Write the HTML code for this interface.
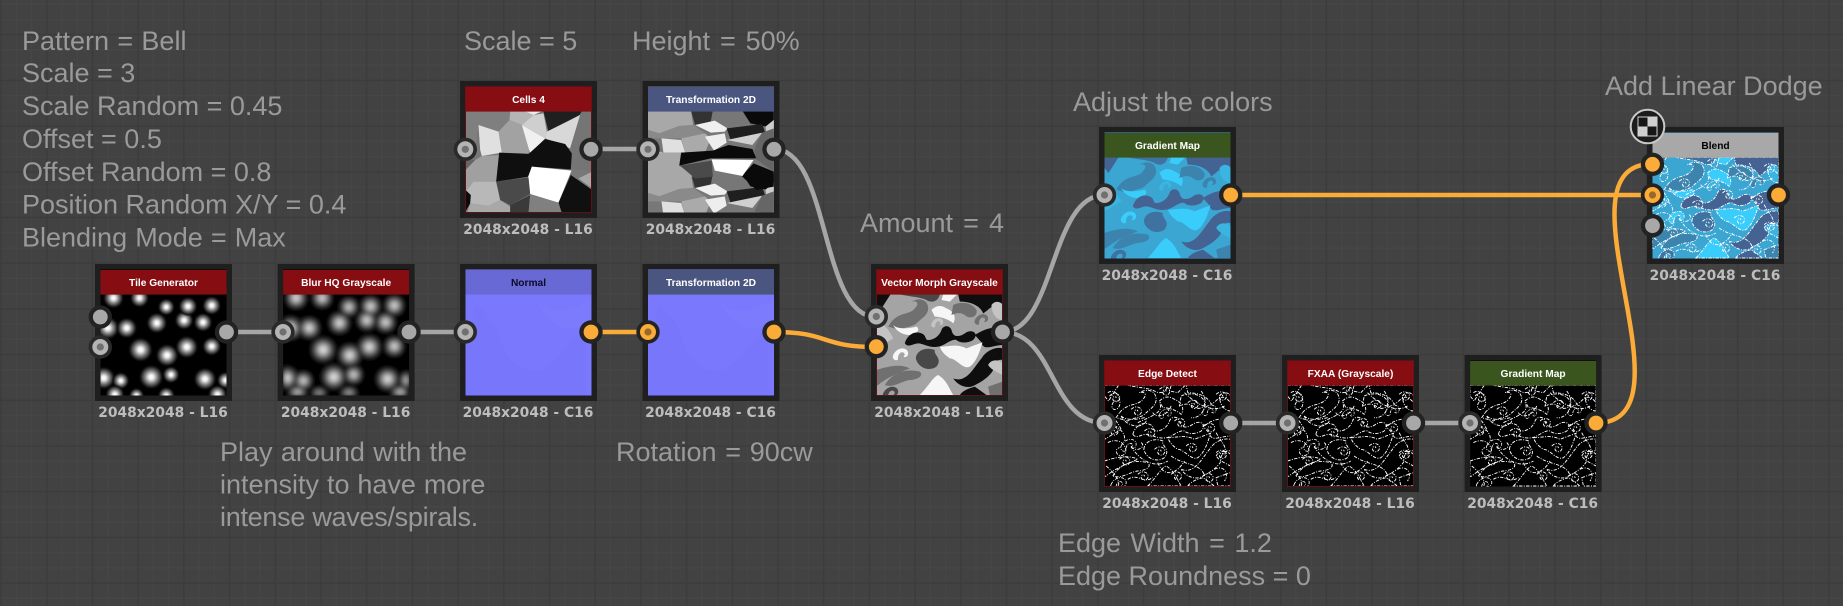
<!DOCTYPE html>
<html lang="en"><head><meta charset="utf-8"><title>Node graph</title>
<style>
html,body{margin:0;padding:0;background:#424242;width:1843px;height:606px;overflow:hidden}
svg{display:block}
.n{font:27px "Liberation Sans",sans-serif;fill:#9a9a9a}
.h{font:bold 10.2px "Liberation Sans",sans-serif;fill:#fff;text-anchor:middle}
.l{font:bold 13.85px "DejaVu Sans",sans-serif;fill:#bdbdbd;text-anchor:middle}
.w{fill:none;stroke-width:4.5;stroke-linecap:round}
.g{stroke:#a6a6a6}.o{stroke:#fbab38}
</style></head><body>
<svg xmlns="http://www.w3.org/2000/svg" width="1843" height="606" viewBox="0 0 1843 606">
<defs>
<pattern id="grid" patternUnits="userSpaceOnUse" x="0.1" y="33.7" width="45.7" height="45.7">
<rect width="45.7" height="45.7" fill="#424242"/>
<path d="M16.2 0V45.7M31.5 0V45.7M0 16.2H45.7M0 31.5H45.7" stroke="#474747" stroke-width="1" fill="none"/>
<path d="M1 0V45.7M0 1H45.7" stroke="#3c3c3c" stroke-width="1.6" fill="none"/>
</pattern>
<radialGradient id="bl"><stop offset="0" stop-color="#fff"/><stop offset=".18" stop-color="#eee"/><stop offset=".5" stop-color="#7a7a7a"/><stop offset=".8" stop-color="#1a1a1a"/><stop offset="1" stop-color="#000" stop-opacity="0"/></radialGradient>
<filter id="blur" x="-10%" y="-10%" width="120%" height="120%"><feGaussianBlur stdDeviation="3"/></filter>

<g id="socO"><circle r="11.7" fill="#232323"/><circle r="7.4" fill="#a8a8a8"/></g>
<g id="socOo"><circle r="11.7" fill="#232323"/><circle r="7.4" fill="#fbab38"/></g>
<g id="socI"><circle r="11.7" fill="#2a2a2a"/><circle r="8" fill="#b4b4b4"/><circle r="3.6" fill="#707070"/></g>
<g id="socIo"><circle r="11.7" fill="#232323"/><circle r="8" fill="#fbab38"/><circle r="3.6" fill="#96682a"/></g>

<symbol id="blobs" viewBox="0 0 126 126" width="126" height="126">
<rect width="126" height="126" fill="#000"/>
<g fill="url(#bl)">
<circle cx="7.3" cy="58.5" r="12"/><circle cx="26.2" cy="58.5" r="11"/><circle cx="56.3" cy="53.5" r="11"/><circle cx="83.6" cy="50.8" r="10"/><circle cx="102.5" cy="52.8" r="10"/>
<circle cx="40" cy="80.2" r="13"/><circle cx="66.6" cy="85.8" r="12"/><circle cx="86.3" cy="77.5" r="12"/><circle cx="111.2" cy="76.8" r="10"/>
<circle cx="3.3" cy="108.5" r="12"/><circle cx="20.3" cy="111.2" r="9"/><circle cx="50.7" cy="107.5" r="13"/><circle cx="70.5" cy="105.2" r="9"/><circle cx="104.5" cy="109.5" r="12"/><circle cx="125" cy="110.8" r="9"/>
<circle cx="14.4" cy="125" r="10"/><circle cx="36" cy="126" r="8"/><circle cx="65.8" cy="126" r="9"/><circle cx="117" cy="125" r="10"/>
<circle cx="65.8" cy="37.5" r="9"/><circle cx="87.5" cy="36.8" r="10"/><circle cx="111.2" cy="36" r="10"/><circle cx="13" cy="28.5" r="11"/><circle cx="39" cy="28.5" r="10"/>
</g>
</symbol>

<symbol id="blurred" viewBox="0 0 126 126" width="126" height="126">
<rect width="126" height="126" fill="#000"/>
<use href="#blobs" filter="url(#blur)"/>
</symbol>

<symbol id="cells" viewBox="0 0 126 126" width="126" height="126">
<g transform="translate(-15.33,-16.5) scale(.3333)">
<rect x="46" y="50" width="380" height="380" fill="#787878"/>
<polygon fill="#7f7f7f" points="46,124 180,124 178,150 145,185 85,165 72,260 46,270"/>
<polygon fill="#a2a2a2" points="145,185 178,150 215,165 237,235 235,250 155,248"/>
<polygon fill="#e0e0e0" points="85,165 145,185 155,248 95,258 90,240"/>
<polygon fill="#b5b5b5" points="180,124 225,124 250,135 215,165 178,150"/>
<polygon fill="#ebebeb" points="225,124 275,124 250,135"/>
<polygon fill="#cfcfcf" points="215,165 250,135 280,130 290,185 285,205"/>
<polygon fill="#f0f0f0" points="215,165 285,205 240,250"/>
<polygon fill="#1f1f1f" points="280,124 395,124 388,135 295,185"/>
<polygon fill="#d8d8d8" points="290,185 390,135 360,235 285,205"/>
<polygon fill="#757575" points="395,124 426,124 426,305 365,295 360,235 390,135"/>
<polygon fill="#a0a0a0" points="46,300 75,270 95,258 150,255 140,335 70,335 46,365"/>
<polygon fill="#666" points="46,270 75,270 46,300"/>
<polygon fill="#0f0f0f" points="147,248 235,252 285,207 345,222 365,250 362,298 245,290 235,320 138,335"/>
<polygon fill="#a8a8a8" points="385,325 426,305 426,355"/>
<polygon fill="#101010" points="362,315 426,360 426,430 335,430 325,398"/>
<polygon fill="#fff" points="245,290 364,302 325,398 240,372 234,320"/>
<polygon fill="#b8b8b8" points="46,365 70,335 140,335 150,390 115,408 60,400"/>
<polygon fill="#a8a8a8" points="50,430 60,400 115,408 150,390 180,410 180,430"/>
<polygon fill="#0c0c0c" points="46,360 62,375 60,400 46,425"/>
<polygon fill="#4a4a4a" points="138,335 235,322 240,372 180,405 150,390"/>
<polygon fill="#3a3a3a" points="180,405 240,375 235,430 180,430"/>
<polygon fill="#808080" points="240,375 325,398 335,430 235,430"/>
</g>
</symbol>

<g id="band">
<polygon fill="#a8a8a8" points="71,333 180,333 185,375 150,378 100,400 71,390"/>
<polygon fill="#333" points="180,333 235,333 230,365 190,375"/>
<polygon fill="#777" points="235,333 310,333 330,370 270,385 230,365"/>
<polygon fill="#0a0a0a" points="310,333 389,333 389,360 370,380 330,370"/>
<polygon fill="#8a8a8a" points="71,390 100,400 150,378 185,375 215,400 155,415 105,415 71,415"/>
<polygon fill="#f0f0f0" points="190,375 240,362 272,385 265,395 230,398"/>
<polygon fill="#1f1f1f" points="270,385 360,372 368,400 280,420"/>
<polygon fill="#ccc" points="368,380 389,360 389,395 370,395"/>
<polygon fill="#e0e0e0" points="105,415 155,420 165,458 110,458"/>
<polygon fill="#aaa" points="155,415 215,400 230,415 215,458 165,458"/>
<polygon fill="#eee" points="215,410 265,400 270,428 238,452"/>
<polygon fill="#d0d0d0" points="270,420 360,398 335,435"/>
<polygon fill="#666" points="360,398 389,385 389,455 340,445"/>
</g>

<symbol id="t2d" viewBox="0 0 126 126" width="126" height="126">
<g transform="scale(.3954,.3333) translate(-71,-259.5)">
<rect x="71" y="259" width="320" height="380" fill="#787878"/>
<use href="#band"/>
<use href="#band" y="189"/>
<polygon fill="#a8a8a8" points="71,458 155,458 150,497 190,530 90,525 71,540"/>
<polygon fill="#b6b6b6" points="71,445 110,458 71,470"/>
<polygon fill="#0a0a0a" points="155,458 235,452 275,435 335,447 345,475 230,475 150,497"/>
<polygon fill="#4a4a4a" points="152,497 232,482 235,530 190,535"/>
<polygon fill="#0a0a0a" points="338,490 389,515 389,560 345,570 308,528"/>
<polygon fill="#fff" points="232,478 338,480 310,528 240,512"/>
<polygon fill="#666" points="340,447 389,450 389,515 345,478"/>
</g>
</symbol>

<path id="hook" d="M0,0C10,-22 35,-28 46,-16 56,-5 46,12 34,6 42,0 38,-9 30,-9 20,-9 15,5 16,16 5,22 -5,10 0,0Z"/>
<path id="spi" d="M0,0C15,-15 35,-5 30,10 25,22 8,18 10,6 12,0 20,0 20,6"/>

<g id="sw">
<path style="fill:var(--d)" d="M50,118H92L62,165 50,150Z"/>
<path style="fill:var(--c)" d="M120,118H240C235,140 215,145 200,135 180,125 150,125 120,118Z"/>
<path style="fill:var(--e)" d="M250,118H292L270,140 245,135Z"/>
<path style="fill:var(--b)" d="M95,200C120,170 150,180 165,160 180,145 170,135 155,140 180,125 205,135 205,160 205,180 185,190 170,205 160,215 135,215 120,225L85,215Z"/>
<path style="fill:var(--e)" d="M215,165C230,150 245,150 260,160 285,170 290,190 280,205 270,195 245,185 225,185Z"/>
<path style="fill:var(--d)" d="M295,118H428V170C400,135 390,165 370,175 360,150 330,140 300,140Z"/>
<path style="fill:var(--b)" d="M280,150C300,140 335,140 350,165 355,185 330,195 315,180 300,170 285,175 275,180Z"/>
<path style="fill:var(--l)" d="M395,150C405,135 425,140 428,150V195C410,195 395,175 395,150Z"/>
<path style="fill:var(--l)" d="M50,200C70,200 90,230 100,250L50,280Z"/>
<path style="fill:var(--e)" d="M100,210C115,225 150,220 170,215 185,225 165,240 150,240 130,240 110,230 100,210Z"/>
<use href="#hook" transform="translate(345,195) scale(.8)" style="fill:var(--b)"/>
<use href="#hook" transform="translate(215,205) scale(.7)" style="fill:var(--l)"/>
<path style="fill:var(--d)" d="M135,265C140,245 160,225 185,235 200,240 195,255 205,255 225,255 240,240 245,225 250,210 270,210 275,225 280,250 300,245 315,235 335,220 360,235 340,255 325,265 300,265 290,255 275,250 250,275 235,275 210,280 190,265 175,265 160,265 145,280 135,265Z"/>
<path style="fill:var(--d)" d="M345,240C370,225 400,210 428,225V270C400,270 370,290 365,262Z"/>
<path style="fill:var(--c)" d="M168,310C170,285 200,275 225,285 220,300 250,310 230,335 210,350 175,340 168,310Z"/>
<path style="fill:var(--e)" d="M240,275C270,275 290,265 320,280 345,270 360,265 368,262 360,290 350,320 330,335 310,345 290,310 270,310 255,300 245,290 240,275Z"/>
<path style="fill:var(--d)" d="M280,370C320,385 340,340 365,310 380,285 410,275 428,280V315C410,310 395,330 400,345 390,365 360,385 335,395 310,400 290,385 280,370Z"/>
<path style="fill:var(--b)" d="M50,345C80,335 120,325 150,340 125,350 85,365 55,390L50,392Z"/>
<path style="fill:var(--b)" d="M75,390C100,350 140,340 180,350 195,365 165,375 150,375 125,378 100,400 75,390Z"/>
<use href="#hook" transform="translate(100,300) scale(.9)" style="fill:var(--e)"/>
<use href="#hook" transform="translate(70,415) scale(.9)" style="fill:var(--c)"/>
<path style="fill:var(--e)" d="M180,420C205,395 220,365 235,360 260,375 265,395 280,420Z"/>
<path style="fill:var(--d)" d="M300,420C310,405 330,400 345,395L380,420Z"/>
<path style="fill:var(--b)" d="M385,395L428,380V420H390Z"/>
<path style="fill:var(--l)" d="M385,330C395,310 420,315 428,325V360C410,350 395,345 385,330Z"/>
</g>

<symbol id="swirl" viewBox="0 0 126 126" width="126" height="126">
<g transform="translate(-16.67,-14.5) scale(.3333)">
<rect x="50" y="40" width="380" height="385" style="fill:var(--m)"/>
<use href="#sw"/>
</g>
</symbol>

<g id="extra">
<path d="M60,140C90,120 110,180 85,190 65,195 70,160 90,165"/>
<path d="M150,230C190,210 230,200 215,170"/>
<path d="M290,140C330,180 380,200 410,180"/>
<path d="M60,290C95,270 125,305 110,325 90,340 75,310 95,305"/>
<path d="M130,300C150,340 200,370 240,345"/>
<path d="M250,330C290,360 340,350 350,390"/>
<path d="M120,400C150,380 165,415 195,395"/>
<path d="M340,135C370,175 340,220 310,215"/>
<path d="M60,230C90,240 115,260 110,285"/>
<path d="M385,260C400,290 420,300 410,330"/>
<path d="M250,180C235,215 200,215 195,200"/>
<path d="M210,350C230,400 270,380 290,345"/>
<path d="M55,360C80,380 100,410 90,420"/>
<path d="M380,370C410,355 425,385 410,405"/>
<path d="M160,290C175,300 150,320 135,305"/>
<use href="#spi" x="65" y="150"/><use href="#spi" x="130" y="190"/><use href="#spi" x="215" y="130"/><use href="#spi" x="300" y="170"/><use href="#spi" x="385" y="145"/>
<use href="#spi" x="60" y="250"/><use href="#spi" x="170" y="255"/><use href="#spi" x="260" y="225"/><use href="#spi" x="350" y="240"/>
<use href="#spi" x="95" y="340"/><use href="#spi" x="200" y="310"/><use href="#spi" x="295" y="300"/><use href="#spi" x="385" y="320"/>
<use href="#spi" x="150" y="385"/><use href="#spi" x="250" y="385"/><use href="#spi" x="345" y="390"/>
</g>

<symbol id="edgeL" viewBox="0 0 126 126" width="126" height="126">
<g transform="translate(-16.67,-14.5) scale(.3333)" fill="none" stroke="#fff" stroke-width="2.8" stroke-dasharray="10 4 3 4" style="--a:none;--b:none;--c:none;--d:none;--e:none;--l:none">
<use href="#sw"/><use href="#extra"/>
</g>
</symbol>

<symbol id="edges" viewBox="0 0 126 126" width="126" height="126">
<rect width="126" height="126" fill="#000"/>
<use href="#edgeL"/>
</symbol>

<symbol id="normal" viewBox="0 0 126 126" width="126" height="126">
<rect width="126" height="126" fill="#7a78fd"/>
<path d="M10 35C40 55 30 90 60 100 85 110 100 70 120 60V126H0V80Z" fill="#7471f4" opacity=".22"/>
<path d="M70 30C90 50 105 40 126 30V50C100 70 85 55 70 30Z" fill="#8280ff" opacity=".25"/>
</symbol>
</defs>

<rect width="1843" height="606" fill="url(#grid)"/>

<!-- wires -->
<g class="wires">
<path class="w g" d="M226,332H283M409,332H465M591,149H648"/>
<path class="w o" d="M591,332H648"/>
<path class="w o" d="M774,332C830,332 820,347 876,347"/>
<path class="w g" d="M774,149C830,149 820,317 876,317"/>
<path class="w g" d="M1002.5,332C1055,332 1050,195 1104.5,195"/>
<path class="w g" d="M1002.5,332C1055,332 1050,423 1104.5,423"/>
<path class="w o" d="M1230.7,195H1652"/>
<path class="w g" d="M1230.7,423H1287M1413.5,423H1470"/>
<path class="w o" d="M1596,423C1700,423 1550,164 1652,164"/>
</g>

<!-- Tile Generator -->
<g transform="translate(95,264)"><rect width="137" height="137" fill="#1f1f1f"/>
<use href="#blobs" x="5.5" y="5.5"/>
<rect x="5.5" y="6" width="126" height="24.6" fill="#860d12"/>
<text class="h" x="68.5" y="22">Tile Generator</text>
<text class="l" x="68" y="153">2048x2048 - L16</text></g>

<!-- Blur -->
<g transform="translate(277.6,264)"><rect width="137" height="137" fill="#1f1f1f"/>
<use href="#blurred" x="5.5" y="5.5"/>
<rect x="5.5" y="6" width="126" height="24.6" fill="#860d12"/>
<text class="h" x="68.5" y="22">Blur HQ Grayscale</text>
<text class="l" x="68" y="153">2048x2048 - L16</text></g>

<!-- Normal -->
<g transform="translate(460,264)"><rect width="137" height="137" fill="#1f1f1f"/>
<use href="#normal" x="5.5" y="5.5"/>
<rect x="5.5" y="6" width="126" height="24.6" fill="#6969d6"/>
<text class="h" x="68.5" y="22" style="fill:#0b0b25">Normal</text>
<text class="l" x="68" y="153">2048x2048 - C16</text></g>

<!-- Transformation normal -->
<g transform="translate(642.5,264)"><rect width="137" height="137" fill="#1f1f1f"/>
<use href="#normal" x="5.5" y="5.5"/>
<rect x="5.5" y="6" width="126" height="24.6" fill="#4a5680"/>
<text class="h" x="68.5" y="22">Transformation 2D</text>
<text class="l" x="68" y="153">2048x2048 - C16</text></g>

<!-- Cells -->
<g transform="translate(460,81)"><rect width="137" height="137" fill="#1f1f1f"/>
<use href="#cells" x="5.5" y="5.5"/>
<rect x="5.5" y="5.5" width="126" height="126" fill="none" stroke="#5c1216" stroke-width="1"/>
<rect x="5.5" y="6" width="126" height="24.6" fill="#860d12"/>
<text class="h" x="68.5" y="22">Cells 4</text>
<text class="l" x="68" y="153">2048x2048 - L16</text></g>

<!-- Transformation cells -->
<g transform="translate(642.5,81)"><rect width="137" height="137" fill="#1f1f1f"/>
<use href="#t2d" x="5.5" y="5.5"/>
<rect x="5.5" y="6" width="126" height="24.6" fill="#4a5680"/>
<text class="h" x="68.5" y="22">Transformation 2D</text>
<text class="l" x="68" y="153">2048x2048 - L16</text></g>

<!-- Vector Morph -->
<g transform="translate(871,264)"><rect width="137" height="137" fill="#1f1f1f"/>
<use href="#swirl" x="5.5" y="5.5" style="--m:#a4a4a4;--b:#707070;--c:#484848;--d:#0e0e0e;--e:#f6f6f6;--l:#c4c4c4"/>
<rect x="5.5" y="5.5" width="126" height="126" fill="none" stroke="#5c1216" stroke-width="1"/>
<rect x="5.5" y="6" width="126" height="24.6" fill="#860d12"/>
<text class="h" x="68.5" y="22">Vector Morph Grayscale</text>
<text class="l" x="68" y="153">2048x2048 - L16</text></g>

<!-- Gradient Map -->
<g transform="translate(1099,127)"><rect width="137" height="137" fill="#1f1f1f"/>
<use href="#swirl" x="5.5" y="5.5" style="--m:#3ba6d2;--b:#3c84ae;--c:#3f72a0;--d:#446392;--e:#3acdfb;--l:#3ab5e2"/>
<rect x="5.5" y="6" width="126" height="24.6" fill="#3a561e"/>
<text class="h" x="68.5" y="22">Gradient Map</text>
<text class="l" x="68" y="153">2048x2048 - C16</text></g>

<!-- Edge Detect -->
<g transform="translate(1099,355)"><rect width="137" height="137" fill="#1f1f1f"/>
<use href="#edges" x="5.5" y="5.5"/>
<rect x="5.5" y="5.5" width="126" height="126" fill="none" stroke="#5c1216" stroke-width="1"/>
<rect x="5.5" y="6" width="126" height="24.6" fill="#860d12"/>
<text class="h" x="68.5" y="22">Edge Detect</text>
<text class="l" x="68" y="153">2048x2048 - L16</text></g>

<!-- FXAA -->
<g transform="translate(1282,355)"><rect width="137" height="137" fill="#1f1f1f"/>
<use href="#edges" x="5.5" y="5.5"/>
<rect x="5.5" y="5.5" width="126" height="126" fill="none" stroke="#5c1216" stroke-width="1"/>
<rect x="5.5" y="6" width="126" height="24.6" fill="#860d12"/>
<text class="h" x="68.5" y="22">FXAA (Grayscale)</text>
<text class="l" x="68" y="153">2048x2048 - L16</text></g>

<!-- Gradient Map 2 -->
<g transform="translate(1464.6,355)"><rect width="137" height="137" fill="#1f1f1f"/>
<use href="#edges" x="5.5" y="5.5"/>
<rect x="5.5" y="6" width="126" height="24.6" fill="#3a561e"/>
<text class="h" x="68.5" y="22">Gradient Map</text>
<text class="l" x="68" y="153">2048x2048 - C16</text></g>

<!-- Blend -->
<g transform="translate(1647,127)"><rect width="137" height="137" fill="#1f1f1f"/>
<use href="#swirl" x="5.5" y="5.5" style="--m:#3ba6d2;--b:#3c84ae;--c:#3f72a0;--d:#446392;--e:#3acdfb;--l:#3ab5e2"/>
<use href="#edgeL" x="5.5" y="5.5"/>
<rect x="5.5" y="6" width="126" height="24.6" fill="#a8a8a8"/>
<text class="h" x="68.5" y="22" style="fill:#000">Blend</text>
<text class="l" x="68" y="153">2048x2048 - C16</text></g>

<!-- sockets -->
<use href="#socO" x="100.3" y="317"/><use href="#socI" x="100.3" y="347"/><use href="#socO" x="226.5" y="332"/>
<use href="#socI" x="283" y="332"/><use href="#socO" x="409" y="332"/>
<use href="#socI" x="465.3" y="332"/><use href="#socOo" x="591" y="332"/>
<use href="#socIo" x="648" y="332"/><use href="#socOo" x="774" y="332"/>
<use href="#socI" x="465.3" y="149.3"/><use href="#socO" x="591" y="149.3"/>
<use href="#socI" x="648" y="149.3"/><use href="#socO" x="774" y="149.3"/>
<use href="#socI" x="876.3" y="316.5"/><use href="#socOo" x="876.3" y="346.7"/><use href="#socO" x="1002.5" y="332"/>
<use href="#socI" x="1104.5" y="195"/><use href="#socOo" x="1230.7" y="195"/>
<use href="#socI" x="1104.5" y="423"/><use href="#socO" x="1230.7" y="423"/>
<use href="#socI" x="1287.5" y="423"/><use href="#socO" x="1413.5" y="423"/>
<use href="#socI" x="1470" y="423"/><use href="#socOo" x="1596" y="423"/>
<use href="#socOo" x="1652.5" y="164.3"/><use href="#socIo" x="1652.5" y="195"/><use href="#socO" x="1652.5" y="225.7"/><use href="#socOo" x="1778.5" y="195"/>

<!-- blend icon -->
<circle cx="1647.5" cy="126.5" r="16.8" fill="#1c1c1c" stroke="#c9c9c9" stroke-width="2"/>
<rect x="1637.5" y="116.5" width="20" height="20" fill="#cfcfcf"/>
<rect x="1638.5" y="117.5" width="9" height="9" fill="#161616"/>
<rect x="1647.5" y="126.5" width="9" height="9" fill="#161616"/>

<!-- notes -->
<text class="n" x="22" y="50" style="word-spacing:.8px">Pattern = Bell</text>
<text class="n" x="22" y="82">Scale = 3</text>
<text class="n" x="22" y="115">Scale Random = 0.45</text>
<text class="n" x="22" y="148">Offset = 0.5</text>
<text class="n" x="22" y="181">Offset Random = 0.8</text>
<text class="n" x="22" y="213.5">Position Random X/Y = 0.4</text>
<text class="n" x="22" y="246.5" style="word-spacing:.6px">Blending Mode = Max</text>
<text class="n" x="464" y="50">Scale = 5</text>
<text class="n" x="632" y="50" style="word-spacing:2.4px">Height = 50%</text>
<text class="n" x="1073" y="111">Adjust the colors</text>
<text class="n" x="860" y="232" style="word-spacing:2.6px">Amount = 4</text>
<text class="n" x="1605" y="95">Add Linear Dodge</text>
<text class="n" x="220" y="461" style="word-spacing:.8px">Play around with the</text>
<text class="n" x="220" y="493.5" style="word-spacing:.4px">intensity to have more</text>
<text class="n" x="220" y="526" style="letter-spacing:-.28px">intense waves/spirals.</text>
<text class="n" x="616" y="461" style="word-spacing:1.2px">Rotation = 90cw</text>
<text class="n" x="1058" y="552" style="word-spacing:2px">Edge Width = 1.2</text>
<text class="n" x="1058" y="585">Edge Roundness = 0</text>
</svg>
</body></html>
